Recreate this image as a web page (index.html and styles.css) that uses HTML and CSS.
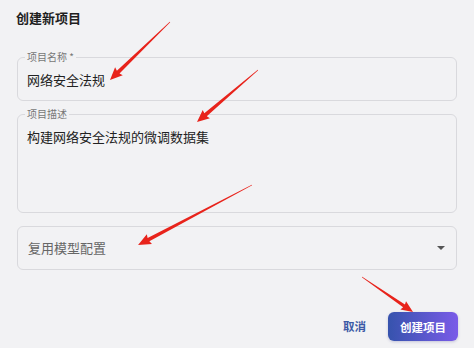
FILE: index.html
```html
<!DOCTYPE html>
<html lang="zh-CN">
<head>
  <meta charset="UTF-8">
  <meta name="viewport" content="width=device-width, initial-scale=1.0">
  <title>创建新项目</title>
  <link rel="stylesheet" href="styles.css">
</head>
<body>
<div class="dialog">
  <h2 class="dialog-title">创建新项目</h2>

  <fieldset class="field">
    <legend>项目名称 *</legend>
    <div class="field-value">网络安全法规</div>
  </fieldset>

  <fieldset class="field field-multi">
    <legend>项目描述</legend>
    <div class="field-value">构建网络安全法规的微调数据集</div>
  </fieldset>

  <div class="select-box">
    <span class="select-placeholder">复用模型配置</span>
    <span class="caret"></span>
  </div>

  <div class="actions">
    <button class="btn-text">取消</button>
    <button class="btn-primary">创建项目</button>
  </div>

  <svg class="arrows" width="474" height="348" viewBox="0 0 474 348">
    <g fill="#e8231b">
      <polygon transform="translate(170 22) rotate(136)" points="0,-0.3 72,-1.9 71,-5.5 83.4,0 71,5.5 72,1.9 0,0.3"/>
      <polygon transform="translate(258 70) rotate(139.5)" points="0,-0.3 69,-1.9 68,-5.5 80.2,0 68,5.5 69,1.9 0,0.3"/>
      <polygon transform="translate(252 185) rotate(152.2)" points="0,-0.3 117,-1.9 116,-5.5 128.8,0 116,5.5 117,1.9 0,0.3"/>
      <polygon transform="translate(362 277) rotate(34.5)" points="0,-0.3 51,-1.6 50,-5 61.9,0 50,5 51,1.6 0,0.3"/>
    </g>
  </svg>
</div>
</body>
</html>
```

FILE: styles.css
```css
* { margin: 0; padding: 0; box-sizing: border-box; }

body {
  font-family: "Noto Sans CJK SC", "Noto Sans", sans-serif;
  background: #f2f2f4;
  color: #222;
  width: 474px;
  height: 348px;
  overflow: hidden;
}

.dialog {
  position: relative;
  padding: 9px 17px 0 17px;
  height: 348px;
}

.dialog-title {
  font-size: 13px;
  line-height: 18px;
  font-weight: 700;
  color: #1f1f1f;
  margin-left: -1px;
}

.field {
  border: 1px solid #d9d9dd;
  border-radius: 6px;
  padding: 0 9px 11px 9px;
  margin-top: 24px;
}

.field legend {
  font-size: 10px;
  line-height: 12px;
  color: #777;
  padding: 0 2px;
  margin-left: -2px;
}

.field-value {
  font-size: 13px;
  line-height: 18px;
  padding-top: 8px;
  color: #222;
}

.field-multi {
  margin-top: 7px;
  padding-bottom: 0;
}

.field-multi .field-value {
  height: 92px;
}

.select-box {
  margin-top: 13px;
  border: 1px solid #d9d9dd;
  border-radius: 6px;
  height: 44px;
  padding: 0 11px 0 10px;
  display: flex;
  align-items: center;
  justify-content: space-between;
}

.select-placeholder {
  font-size: 13px;
  line-height: 18px;
  color: #666;
}

.caret {
  width: 0;
  height: 0;
  border-left: 4px solid transparent;
  border-right: 4px solid transparent;
  border-top: 4px solid #555;
}

.actions {
  margin-top: 42px;
  display: flex;
  justify-content: flex-end;
  align-items: center;
  gap: 14px;
}

.btn-text {
  background: none;
  border: none;
  font-family: inherit;
  font-size: 11.5px;
  font-weight: 700;
  color: #3c5aa6;
  padding: 0 8px;
  line-height: 29px;
}

.btn-primary {
  font-family: inherit;
  border: none;
  border-radius: 6px;
  height: 29px;
  width: 70px;
  font-size: 11.5px;
  font-weight: 700;
  color: #fff;
  background: linear-gradient(90deg, #3653ad, #7a5be8);
  box-shadow: 0 1px 3px rgba(60, 60, 140, 0.25);
  margin-right: -1px;
}

.arrows {
  position: absolute;
  left: 0;
  top: 0;
  pointer-events: none;
}
```
